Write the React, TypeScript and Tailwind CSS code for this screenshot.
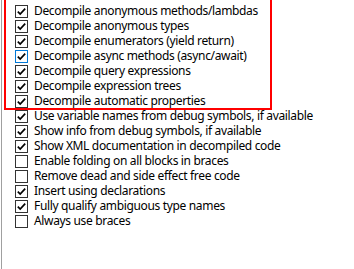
import React from "react";

type Item = { label: string; checked: boolean; focused?: boolean };

const items: Item[] = [
  { label: "Decompile anonymous methods/lambdas", checked: true },
  { label: "Decompile anonymous types", checked: true },
  { label: "Decompile enumerators (yield return)", checked: true },
  { label: "Decompile async methods (async/await)", checked: true, focused: true },
  { label: "Decompile query expressions", checked: true },
  { label: "Decompile expression trees", checked: true },
  { label: "Decompile automatic properties", checked: true },
  { label: "Use variable names from debug symbols, if available", checked: true },
  { label: "Show info from debug symbols, if available", checked: true },
  { label: "Show XML documentation in decompiled code", checked: true },
  { label: "Enable folding on all blocks in braces", checked: false },
  { label: "Remove dead and side effect free code", checked: false },
  { label: "Insert using declarations", checked: true },
  { label: "Fully qualify ambiguous type names", checked: true },
  { label: "Always use braces", checked: false },
];

function Box({ checked, focused }: { checked: boolean; focused?: boolean }) {
  return (
    <div
      className={
        focused
          ? "w-[13px] h-[13px] shrink-0 border border-[#0078d7] bg-white flex items-center justify-center"
          : "w-[13px] h-[13px] shrink-0 border border-[#333333] bg-white flex items-center justify-center"
      }
    >
      {checked && (
        <svg width="11" height="11" viewBox="0 0 11 11">
          <path d="M1.8 5.6 L4.2 8 L9.2 2.6" fill="none" stroke="#000" strokeWidth="1.7" />
        </svg>
      )}
    </div>
  );
}

export default function App() {
  return (
    <div
      className="w-[354px] h-[269px] bg-white relative flex overflow-hidden"
      style={{ fontFamily: '"Noto Sans", "Open Sans", sans-serif' }}
    >
      <div className="w-[1px] ml-[1px] bg-[#a0a0a0] shrink-0" />
      <div className="flex flex-col pt-[4px] pl-[13px]">
        {items.map((it) => (
          <div key={it.label} className="h-[15px] flex items-center gap-[6px]">
            <Box checked={it.checked} focused={it.focused} />
            <span className="text-[12px] leading-[14px] tracking-[-0.34px] text-black whitespace-nowrap -translate-y-[1px]">
              {it.label}
            </span>
          </div>
        ))}
      </div>
      <div className="absolute left-[4px] top-[-4px] w-[268px] h-[114px] border-2 border-[#ff0000] pointer-events-none" />
    </div>
  );
}
